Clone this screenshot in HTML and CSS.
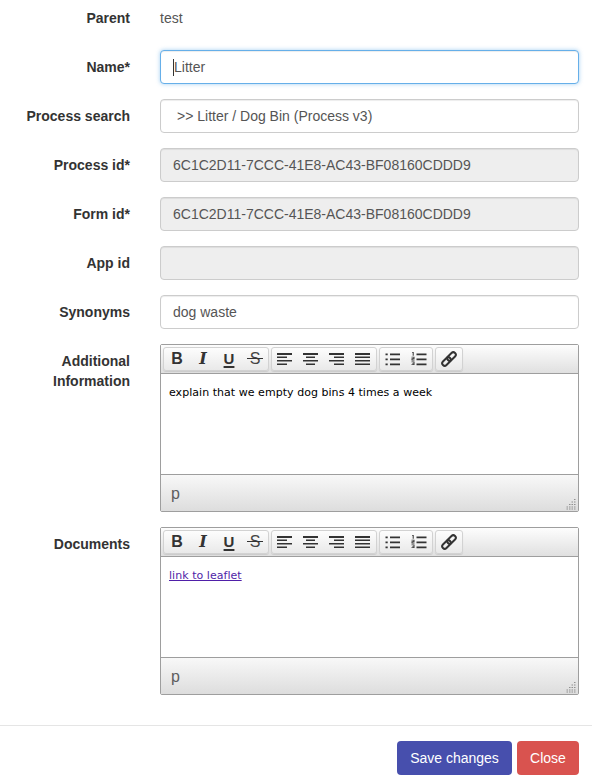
FILE: index.html
```html
<!DOCTYPE html>
<html lang="en">
<head>
    <meta charset="UTF-8">
    <meta name="viewport" content="width=device-width, initial-scale=1.0">
    <title>Edit process</title>
    <link rel="stylesheet" href="styles.css">
</head>
<body>
    <form class="form">
        <div class="form-row">
            <label class="form-label">Parent</label>
            <p class="form-static">test</p>
        </div>
        <div class="form-row">
            <label class="form-label">Name*</label>
            <div class="form-control is-focus"><span class="caret"></span>Litter</div>
        </div>
        <div class="form-row">
            <label class="form-label">Process search</label>
            <div class="form-control search-value">&gt;&gt; Litter / Dog Bin (Process v3)</div>
        </div>
        <div class="form-row">
            <label class="form-label">Process id*</label>
            <div class="form-control is-readonly">6C1C2D11-7CCC-41E8-AC43-BF08160CDDD9</div>
        </div>
        <div class="form-row">
            <label class="form-label">Form id*</label>
            <div class="form-control is-readonly">6C1C2D11-7CCC-41E8-AC43-BF08160CDDD9</div>
        </div>
        <div class="form-row">
            <label class="form-label">App id</label>
            <div class="form-control is-readonly"></div>
        </div>
        <div class="form-row">
            <label class="form-label">Synonyms</label>
            <div class="form-control">dog waste</div>
        </div>
        <div class="form-row">
            <label class="form-label">Additional Information</label>
            <div class="editor">
                <div class="toolbar">
                    <div class="tool-group">
                        <span class="tool tool-b">B</span>
                        <span class="tool tool-i">I</span>
                        <span class="tool tool-u">U</span>
                        <span class="tool tool-s">S</span>
                    </div>
                    <div class="tool-group">
                        <span class="tool"><svg class="icon" viewBox="0 0 16 14"><use href="#align-left"/></svg></span>
                        <span class="tool"><svg class="icon" viewBox="0 0 16 14"><use href="#align-center"/></svg></span>
                        <span class="tool"><svg class="icon" viewBox="0 0 16 14"><use href="#align-right"/></svg></span>
                        <span class="tool"><svg class="icon" viewBox="0 0 16 14"><use href="#align-justify"/></svg></span>
                    </div>
                    <div class="tool-group">
                        <span class="tool"><svg class="icon" viewBox="0 0 16 14"><use href="#list-bullet"/></svg></span>
                        <span class="tool"><svg class="icon" viewBox="0 0 16 14"><use href="#list-number"/></svg></span>
                    </div>
                    <div class="tool-group">
                        <span class="tool"><svg class="icon-link" viewBox="0 0 16 16"><use href="#chain"/></svg></span>
                    </div>
                </div>
                <div class="editor-body">explain that we empty dog bins 4 times a week</div>
                <div class="statusbar">p<svg class="grip" viewBox="0 0 12 12"><use href="#grip"/></svg></div>
            </div>
        </div>
        <div class="form-row">
            <label class="form-label">Documents</label>
            <div class="editor">
                <div class="toolbar">
                    <div class="tool-group">
                        <span class="tool tool-b">B</span>
                        <span class="tool tool-i">I</span>
                        <span class="tool tool-u">U</span>
                        <span class="tool tool-s">S</span>
                    </div>
                    <div class="tool-group">
                        <span class="tool"><svg class="icon" viewBox="0 0 16 14"><use href="#align-left"/></svg></span>
                        <span class="tool"><svg class="icon" viewBox="0 0 16 14"><use href="#align-center"/></svg></span>
                        <span class="tool"><svg class="icon" viewBox="0 0 16 14"><use href="#align-right"/></svg></span>
                        <span class="tool"><svg class="icon" viewBox="0 0 16 14"><use href="#align-justify"/></svg></span>
                    </div>
                    <div class="tool-group">
                        <span class="tool"><svg class="icon" viewBox="0 0 16 14"><use href="#list-bullet"/></svg></span>
                        <span class="tool"><svg class="icon" viewBox="0 0 16 14"><use href="#list-number"/></svg></span>
                    </div>
                    <div class="tool-group">
                        <span class="tool"><svg class="icon-link" viewBox="0 0 16 16"><use href="#chain"/></svg></span>
                    </div>
                </div>
                <div class="editor-body"><a class="editor-link" href="#">link to leaflet</a></div>
                <div class="statusbar">p<svg class="grip" viewBox="0 0 12 12"><use href="#grip"/></svg></div>
            </div>
        </div>
        <div class="form-footer">
            <button type="button" class="btn btn-save">Save changes</button>
            <button type="button" class="btn btn-close">Close</button>
        </div>
    </form>

    <svg class="sprites" width="0" height="0">
        <symbol id="align-left" viewBox="0 0 16 14"><path d="M0 1h15v2H0zM0 4.500h10v1.600H0zM0 8h15v1.600H0zM0 11.500h10v1.600H0z"/></symbol>
        <symbol id="align-center" viewBox="0 0 16 14"><path d="M0 1h15v2H0zM3 4.500h9v1.600H3zM0 8h15v1.600H0zM3 11.500h9v1.600H3z"/></symbol>
        <symbol id="align-right" viewBox="0 0 16 14"><path d="M0 1h15v2H0zM5 4.500h10v1.600H5zM0 8h15v1.600H0zM5 11.500h10v1.600H5z"/></symbol>
        <symbol id="align-justify" viewBox="0 0 16 14"><path d="M0 1h15v2H0zM0 4.500h15v1.600H0zM0 8h15v1.600H0zM0 11.500h15v1.600H0z"/></symbol>
        <symbol id="list-bullet" viewBox="0 0 16 14"><path d="M.5 1.500h2.200v1.800H.5zM5 1.500h10v1.800H5zM.5 6.500h2.200v1.800H.5zM5 6.500h10v1.800H5zM.5 11.500h2.200v1.800H.5zM5 11.500h10v1.800H5z"/></symbol>
        <symbol id="list-number" viewBox="0 0 16 14"><path d="M5.500 1.500h10v1.800h-10zM5.500 6.500h10v1.800h-10zM5.500 11.500h10v1.800h-10zM1.500 0h1.200v3.800H1.700V1H1zM.5 4.800h3v2.200H1.500v.6h2v.8h-3V6.300h2v-.7h-2zM.5 9.600h3v3.400h-3v-.7h2v-.7H1.100v-.6h1.400v-.7h-2z"/></symbol>
        <symbol id="chain" viewBox="0 0 16 16"><g fill="none" stroke="currentColor" stroke-width="2"><rect x="0.500" y="8" width="10" height="5" rx="2.500" transform="rotate(-45 5.500 10.500)"/><rect x="5.500" y="3" width="10" height="5" rx="2.500" transform="rotate(-45 10.500 5.500)"/></g></symbol>
        <symbol id="grip" viewBox="0 0 12 12"><path d="M9 1h1.500v1H9zM9 3.500h1.500v1H9zM6.500 3.500H8v1H6.500zM9 6h1.500v1H9zM6.500 6H8v1H6.500zM4 6h1.500v1H4zM9 8.500h1.500v1H9zM6.500 8.500H8v1H6.500zM4 8.500h1.500v1H4zM1.500 8.500H3v1H1.500zM9 10.500h1.500v1H9zM6.500 10.500H8v1H6.500zM4 10.500h1.500v1H4zM1.500 10.500H3v1H1.500z"/></symbol>
    </svg>
</body>
</html>
```

FILE: styles.css
```css
* {
    box-sizing: border-box;
    margin: 0;
    padding: 0;
}

html, body {
    height: 100%;
    overflow: hidden;
}

body {
    font-family: 'Liberation Sans', Arial, sans-serif;
    font-size: 14px;
    line-height: 20px;
    color: #333333;
    background-color: #ffffff;
}

.sprites {
    position: absolute;
}

.form {
    padding-top: 1px;
}

.form-row {
    display: grid;
    grid-template-columns: 130px 419px;
    column-gap: 30px;
    margin-bottom: 15px;
}

.form-label {
    padding-top: 7px;
    font-weight: bold;
    text-align: right;
}

.form-static {
    min-height: 34px;
    padding-top: 7px;
    color: #555555;
}

.form-control {
    height: 34px;
    padding: 6px 12px;
    border: 1px solid #cccccc;
    border-radius: 4px;
    color: #555555;
    background-color: #ffffff;
    box-shadow: inset 0 1px 1px rgba(0, 0, 0, 0.075);
}

.is-focus {
    display: flex;
    border-color: #66afe9;
    box-shadow: inset 0 1px 1px rgba(0, 0, 0, 0.075), 0 0 4px rgba(102, 175, 233, 0.6);
}

.caret {
    width: 1px;
    height: 17px;
    margin-top: 2px;
    background-color: #333333;
}

.search-value {
    padding-left: 16px;
}

.is-readonly {
    background-color: #eeeeee;
}

.editor {
    display: flex;
    flex-direction: column;
    height: 168px;
    border: 1px solid #9e9e9e;
    border-radius: 2px;
}

.toolbar {
    display: flex;
    gap: 2px;
    height: 29px;
    padding: 2px 2px 0;
    border-bottom: 1px solid #9e9e9e;
    background: linear-gradient(#fdfdfd, #e0e0e0);
}

.tool-group {
    display: flex;
    height: 24px;
    border: 1px solid #d2d2d2;
    border-radius: 3px;
    background: linear-gradient(#fdfdfd, #e9e9e9);
    box-shadow: 0 1px 1px rgba(0, 0, 0, 0.1);
}

.tool {
    position: relative;
    display: flex;
    align-items: center;
    justify-content: center;
    width: 26px;
    color: #333333;
    font-size: 15px;
}

.tool-b {
    font-weight: bold;
    font-size: 16px;
}

.tool-i {
    font-family: 'DejaVu Serif', serif;
    font-style: italic;
    font-weight: bold;
    font-size: 16px;
}

.tool-u {
    font-weight: bold;
    text-decoration: underline;
    text-decoration-thickness: 2px;
    text-underline-offset: 2px;
}

.tool-s {
    font-size: 16px;
    color: #444444;
}

.tool-s::after {
    content: '';
    position: absolute;
    left: 5px;
    right: 5px;
    top: 10px;
    height: 1px;
    background-color: #333333;
}

.icon {
    width: 16px;
    height: 14px;
    fill: #333333;
}

.icon-link {
    width: 16px;
    height: 16px;
    color: #333333;
}

.editor-body {
    flex: 1;
    padding: 10px 8px;
    font-family: 'DejaVu Sans', Verdana, sans-serif;
    font-size: 11px;
    letter-spacing: 0.04px;
    line-height: 18px;
    color: #000000;
    background-color: #ffffff;
}

.editor-link {
    color: #4f1fa8;
}

.statusbar {
    position: relative;
    height: 37px;
    padding: 9px 10px;
    border-top: 1px solid #9e9e9e;
    background: linear-gradient(#f8f8f8, #dddddd);
    color: #5e5e5e;
    font-size: 16px;
}

.grip {
    position: absolute;
    right: 1px;
    bottom: 1px;
    width: 12px;
    height: 12px;
    fill: #909090;
}

.form-footer {
    display: flex;
    justify-content: flex-end;
    gap: 5px;
    margin-top: 30px;
    padding: 15px 13px 5px 15px;
    border-top: 1px solid #e5e5e5;
}

.btn {
    height: 34px;
    padding: 6px 12px;
    border: 1px solid transparent;
    border-radius: 4px;
    color: #ffffff;
    font-family: inherit;
    font-size: 14px;
    line-height: 20px;
}

.btn-save {
    background-color: #474fad;
    width: 115px;
}

.btn-close {
    background-color: #d9534f;
    width: 62px;
}
```
